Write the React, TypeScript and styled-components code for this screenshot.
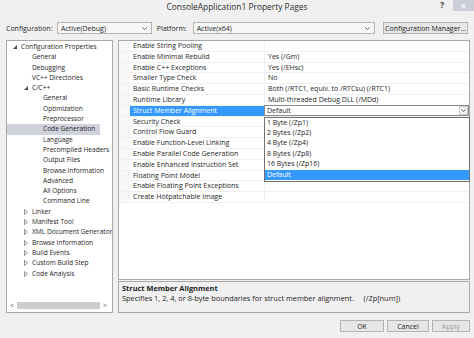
import React from 'react';
import styled, { createGlobalStyle } from 'styled-components';

const GlobalStyle = createGlobalStyle`
  html, body {
    margin: 0;
    padding: 0;
    background: #f0f0f0;
  }
  body {
    font-family: "Open Sans", "Noto Sans", sans-serif;
  }
`;

const Window = styled.div`
  width: 474px;
  height: 338px;
  background: #f0f0f0;
  display: flex;
  flex-direction: column;
  overflow: hidden;
  color: #1e1e1e;
  font-size: 7px;
`;

const TitleBar = styled.div`
  height: 18px;
  display: grid;
  grid-template-columns: 1fr auto 1fr;
  align-items: start;
`;

const Title = styled.div`
  grid-column: 2;
  font-size: 8.4px;
  line-height: 14px;
  color: #2b2b2b;
`;

const TitleControls = styled.div`
  justify-self: end;
  display: flex;
  align-items: flex-start;
`;

const HelpGlyph = styled.span`
  font-size: 8px;
  font-weight: 700;
  line-height: 9px;
  margin-right: 9px;
  color: #333;
`;

const CloseButton = styled.div`
  width: 21px;
  height: 11px;
  background: #c9ced8;
  color: #fff;
  font-size: 8px;
  line-height: 11px;
  text-align: center;
`;

const ConfigRow = styled.div`
  height: 12px;
  margin-top: 4px;
  padding: 0 6px;
  display: flex;
  align-items: center;
`;

const Label = styled.span<{ $width: number }>`
  width: ${({ $width }) => $width}px;
  flex-shrink: 0;
`;

const Combo = styled.div<{ $width: number }>`
  width: ${({ $width }) => $width}px;
  height: 12px;
  box-sizing: border-box;
  border: 1px solid #b4b4b4;
  background: #f7f7f7;
  display: flex;
  align-items: center;
  justify-content: space-between;
  padding: 0 4px 0 3px;
  margin-right: 5px;
`;

const PushButton = styled.div<{ $width: number; $disabled?: boolean }>`
  width: ${({ $width }) => $width}px;
  height: 12px;
  box-sizing: border-box;
  border: 1px solid #b4b4b4;
  background: #e6e6e6;
  color: ${({ $disabled }) => ($disabled ? '#a0a0a0' : '#1e1e1e')};
  display: flex;
  align-items: center;
  justify-content: center;
  flex-shrink: 0;
`;

const Body = styled.div`
  height: 273px;
  margin-top: 6px;
  padding: 0 4px 0 6px;
  display: flex;
  gap: 5px;
`;

const TreePanel = styled.div`
  width: 107px;
  box-sizing: border-box;
  border: 1px solid #a8a8a8;
  background: #fff;
  display: flex;
  flex-direction: column;
  font-size: 6.6px;
`;

const TreeList = styled.div`
  flex: 1;
  padding-top: 1px;
  overflow: hidden;
`;

const TreeRow = styled.div<{ $level: number; $selected?: boolean }>`
  height: 10.3px;
  line-height: 10.3px;
  display: flex;
  align-items: center;
  white-space: nowrap;
  padding-left: ${({ $level }) => 6 + $level * 11}px;
  margin-right: ${({ $selected }) => ($selected ? '12px' : '0')};
  background: ${({ $selected }) => ($selected ? '#cfd2dc' : 'transparent')};
`;

const Expander = styled.span`
  width: 8px;
  flex-shrink: 0;
  display: flex;
  align-items: center;
`;

const HScroll = styled.div`
  height: 8px;
  margin: 0 4px 3px 3px;
  display: flex;
  align-items: center;
  gap: 3px;
  color: #555;
  font-size: 7px;
`;

const ScrollThumb = styled.div`
  width: 83px;
  height: 7px;
  background: #cdcdcd;
`;

const RightColumn = styled.div`
  flex: 1;
  display: flex;
  flex-direction: column;
  gap: 1px;
`;

const GridPanel = styled.div`
  position: relative;
  height: 240px;
  box-sizing: border-box;
  border: 1px solid #a8a8a8;
  background: #fff;
`;

const GridRow = styled.div`
  height: 10.8px;
  box-sizing: border-box;
  display: grid;
  grid-template-columns: 11px 134px 1fr;
  border-bottom: 1px solid #f0f0f0;
  line-height: 10px;
`;

const Gutter = styled.div`
  background: #f7f7f7;
`;

const NameCell = styled.div<{ $selected?: boolean }>`
  padding-left: 3px;
  white-space: nowrap;
  background: ${({ $selected }) => ($selected ? '#3399ff' : 'transparent')};
  color: ${({ $selected }) => ($selected ? '#fff' : '#1e1e1e')};
`;

const ValueCell = styled.div`
  border-left: 1px solid #f0f0f0;
  padding-left: 3px;
  white-space: nowrap;
  overflow: hidden;
`;

const EditCombo = styled.div`
  border: 1px solid #8a8a8a;
  margin-top: -0.5px;
  height: 11px;
  box-sizing: border-box;
  display: flex;
  align-items: center;
  justify-content: space-between;
  padding-left: 2px;
  background: #fff;
`;

const ArrowBox = styled.div`
  width: 9px;
  height: 9px;
  box-sizing: border-box;
  border: 1px solid #c8c8c8;
  background: #f2f2f2;
  display: flex;
  align-items: center;
  justify-content: center;
`;

const DropList = styled.div`
  position: absolute;
  top: 75.6px;
  left: 145px;
  right: -1px;
  height: 65px;
  box-sizing: border-box;
  border: 1px solid #707070;
  background: #fff;
  z-index: 2;
`;

const DropItem = styled.div<{ $selected?: boolean }>`
  height: 10.4px;
  line-height: 10.4px;
  padding-left: 2px;
  background: ${({ $selected }) => ($selected ? '#3399ff' : 'transparent')};
  color: ${({ $selected }) => ($selected ? '#fff' : '#1e1e1e')};
`;

const Description = styled.div`
  height: 32px;
  box-sizing: border-box;
  border: 1px solid #a8a8a8;
  background: #f0f0f0;
  padding: 1px 3px;
  line-height: 10px;
  font-size: 7.4px;
`;

const DescTitle = styled.div`
  font-weight: 700;
`;

const DescText = styled.div`
  white-space: pre;
`;

const Footer = styled.div`
  margin-top: 7px;
  padding-right: 4px;
  display: flex;
  justify-content: flex-end;
  gap: 3px;
`;

const Chevron = () => (
  <svg width="5" height="3" viewBox="0 0 5 3">
    <polyline points="0.5,0.5 2.5,2.5 4.5,0.5" fill="none" stroke="#555" strokeWidth="1" />
  </svg>
);

const ExpandedMark = () => (
  <svg width="4" height="4" viewBox="0 0 4 4">
    <polygon points="4,0 4,4 0,4" fill="#444" />
  </svg>
);

const CollapsedMark = () => (
  <svg width="4" height="6" viewBox="0 0 4 6">
    <polygon points="0.5,0.5 3.5,3 0.5,5.5" fill="none" stroke="#777" strokeWidth="0.8" />
  </svg>
);

type TreeItem = { label: string; level: number; mark?: 'open' | 'closed'; selected?: boolean };

const treeItems: TreeItem[] = [
  { label: 'Configuration Properties', level: 0, mark: 'open' },
  { label: 'General', level: 1 },
  { label: 'Debugging', level: 1 },
  { label: 'VC++ Directories', level: 1 },
  { label: 'C/C++', level: 1, mark: 'open' },
  { label: 'General', level: 2 },
  { label: 'Optimization', level: 2 },
  { label: 'Preprocessor', level: 2 },
  { label: 'Code Generation', level: 2, selected: true },
  { label: 'Language', level: 2 },
  { label: 'Precompiled Headers', level: 2 },
  { label: 'Output Files', level: 2 },
  { label: 'Browse Information', level: 2 },
  { label: 'Advanced', level: 2 },
  { label: 'All Options', level: 2 },
  { label: 'Command Line', level: 2 },
  { label: 'Linker', level: 1, mark: 'closed' },
  { label: 'Manifest Tool', level: 1, mark: 'closed' },
  { label: 'XML Document Generator', level: 1, mark: 'closed' },
  { label: 'Browse Information', level: 1, mark: 'closed' },
  { label: 'Build Events', level: 1, mark: 'closed' },
  { label: 'Custom Build Step', level: 1, mark: 'closed' },
  { label: 'Code Analysis', level: 1, mark: 'closed' },
];

const properties: [string, string][] = [
  ['Enable String Pooling', ''],
  ['Enable Minimal Rebuild', 'Yes (/Gm)'],
  ['Enable C++ Exceptions', 'Yes (/EHsc)'],
  ['Smaller Type Check', 'No'],
  ['Basic Runtime Checks', 'Both (/RTC1, equiv. to /RTCsu) (/RTC1)'],
  ['Runtime Library', 'Multi-threaded Debug DLL (/MDd)'],
  ['Struct Member Alignment', 'Default'],
  ['Security Check', ''],
  ['Control Flow Guard', ''],
  ['Enable Function-Level Linking', ''],
  ['Enable Parallel Code Generation', ''],
  ['Enable Enhanced Instruction Set', ''],
  ['Floating Point Model', ''],
  ['Enable Floating Point Exceptions', ''],
  ['Create Hotpatchable Image', ''],
];

const alignments = ['1 Byte (/Zp1)', '2 Bytes (/Zp2)', '4 Byte (/Zp4)', '8 Bytes (/Zp8)', '16 Bytes (/Zp16)', 'Default'];

const App: React.FC = () => {
  const selectedProp = 'Struct Member Alignment';

  return (
    <Window>
      <GlobalStyle />
      <TitleBar>
        <Title>ConsoleApplication1 Property Pages</Title>
        <TitleControls>
          <HelpGlyph>?</HelpGlyph>
          <CloseButton>✕</CloseButton>
        </TitleControls>
      </TitleBar>

      <ConfigRow>
        <Label $width={51}>Configuration:</Label>
        <Combo $width={95}>
          <span>Active(Debug)</span>
          <Chevron />
        </Combo>
        <Label $width={36}>Platform:</Label>
        <Combo $width={183}>
          <span>Active(x64)</span>
          <Chevron />
        </Combo>
        <span style={{ width: 3 }} />
        <PushButton $width={85}>Configuration Manager...</PushButton>
      </ConfigRow>

      <Body>
        <TreePanel>
          <TreeList>
            {treeItems.map((item, i) => (
              <TreeRow key={i} $level={item.level} $selected={item.selected}>
                <Expander>
                  {item.mark === 'open' && <ExpandedMark />}
                  {item.mark === 'closed' && <CollapsedMark />}
                </Expander>
                {item.label}
              </TreeRow>
            ))}
          </TreeList>
          <HScroll>
            <span>&lt;</span>
            <ScrollThumb />
            <span>&gt;</span>
          </HScroll>
        </TreePanel>

        <RightColumn>
          <GridPanel>
            {properties.map(([name, value]) => {
              const selected = name === selectedProp;
              return (
                <GridRow key={name}>
                  <Gutter />
                  <NameCell $selected={selected}>{name}</NameCell>
                  {selected ? (
                    <EditCombo>
                      <span>{value}</span>
                      <ArrowBox>
                        <Chevron />
                      </ArrowBox>
                    </EditCombo>
                  ) : (
                    <ValueCell>{value}</ValueCell>
                  )}
                </GridRow>
              );
            })}
            <DropList>
              {alignments.map((a) => (
                <DropItem key={a} $selected={a === 'Default'}>
                  {a}
                </DropItem>
              ))}
            </DropList>
          </GridPanel>
          <Description>
            <DescTitle>Struct Member Alignment</DescTitle>
            <DescText>Specifies 1, 2, 4, or 8-byte boundaries for struct member alignment.     (/Zp[num])</DescText>
          </Description>
        </RightColumn>
      </Body>

      <Footer>
        <PushButton $width={44}>OK</PushButton>
        <PushButton $width={42}>Cancel</PushButton>
        <PushButton $width={38} $disabled>
          Apply
        </PushButton>
      </Footer>
    </Window>
  );
};

export default App;
